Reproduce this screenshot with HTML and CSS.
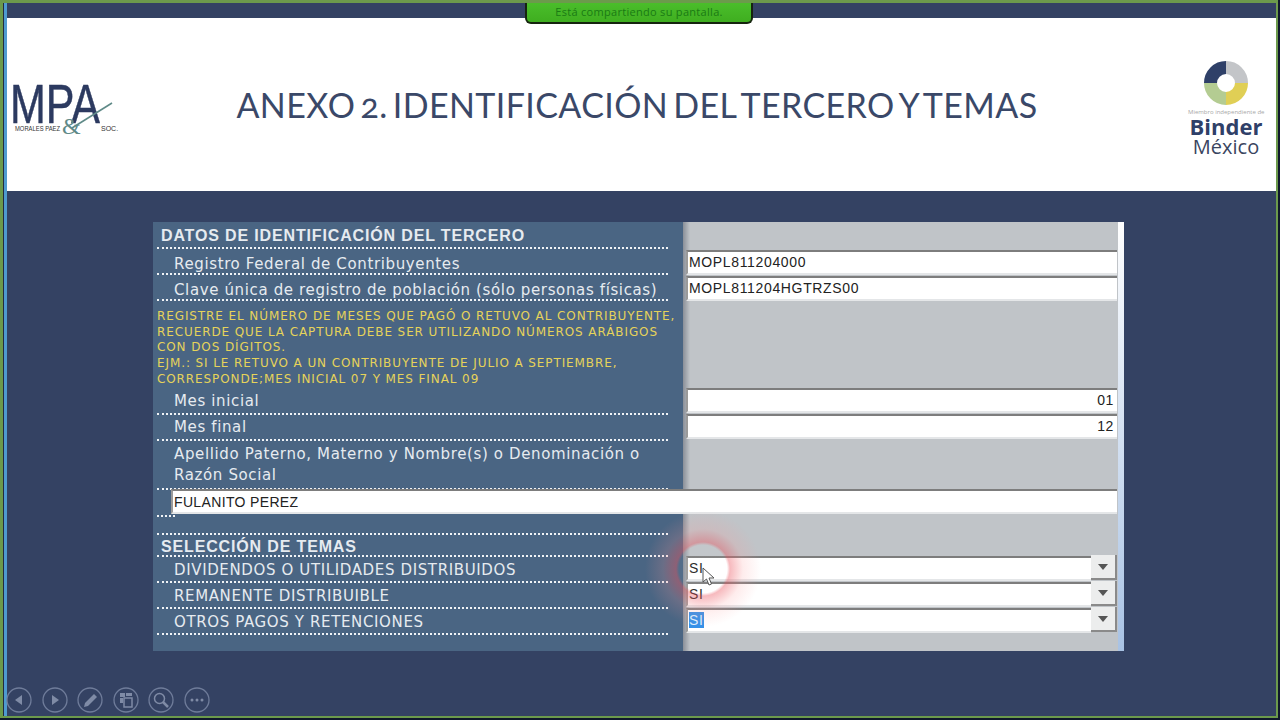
FILE: index.html
```html
<!DOCTYPE html>
<html lang="es">
<head>
    <meta charset="UTF-8">
    <title>Anexo 2</title>
    <link rel="stylesheet" href="styles.css">
</head>
<body>
    <div class="window">
        <div class="share-banner">Está compartiendo su pantalla.</div>

        <header class="slide-header">
            <div class="logo-mpa">
                <svg width="112" height="70" viewBox="0 0 112 70">
                    <text class="mpa-big" x="-2" y="53" textLength="90" lengthAdjust="spacingAndGlyphs">MPA</text>
                    <text class="mpa-small" x="3" y="61" textLength="45" lengthAdjust="spacingAndGlyphs">MORALES PAEZ</text>
                    <text class="mpa-amp" x="50" y="64">&amp;</text>
                    <text class="mpa-small" x="89" y="61">SOC.</text>
                    <line x1="60" y1="58" x2="100" y2="33" stroke="#5f8a88" stroke-width="1.6"/>
                </svg>
            </div>
            <h1 class="slide-title">ANEXO 2. IDENTIFICACIÓN DEL TERCERO Y TEMAS</h1>
            <div class="logo-binder">
                <svg width="44" height="44" viewBox="0 0 44 44">
                    <g fill="none" stroke-width="13">
                        <path d="M22 6.500A15.500 15.500 0 0 0 6.500 22" stroke="#2f4068"/>
                        <path d="M22 6.500A15.500 15.500 0 0 1 37.500 22" stroke="#c3c5c8"/>
                        <path d="M37.500 22A15.500 15.500 0 0 1 22 37.500" stroke="#e0cf55"/>
                        <path d="M22 37.500A15.500 15.500 0 0 1 6.500 22" stroke="#b4cc92"/>
                    </g>
                </svg>
                <div class="binder-tag">Miembro independiente de</div>
                <div class="binder-name">Binder</div>
                <div class="binder-country">México</div>
            </div>
        </header>

        <main class="slide-body">
            <section class="form-panel">
                <div class="row row-title"><div class="label heading">DATOS DE IDENTIFICACIÓN DEL TERCERO</div></div>
                <div class="row row-top">
                    <div class="label">Registro Federal de Contribuyentes</div>
                    <div class="field">MOPL811204000</div>
                </div>
                <div class="row row-top">
                    <div class="label">Clave única de registro de población (sólo personas físicas)</div>
                    <div class="field">MOPL811204HGTRZS00</div>
                </div>
                <div class="notice">
                    REGISTRE EL NÚMERO DE MESES QUE PAGÓ O RETUVO AL CONTRIBUYENTE,<br>
                    RECUERDE QUE LA CAPTURA DEBE SER UTILIZANDO NÚMEROS ARÁBIGOS<br>
                    CON DOS DÍGITOS.<br>
                    EJM.: SI LE RETUVO A UN CONTRIBUYENTE DE JULIO A SEPTIEMBRE,<br>
                    CORRESPONDE;MES INICIAL 07 Y MES FINAL 09
                </div>
                <div class="row">
                    <div class="label">Mes inicial</div>
                    <div class="field number">01</div>
                </div>
                <div class="row">
                    <div class="label">Mes final</div>
                    <div class="field number">12</div>
                </div>
                <div class="row row-double">
                    <div class="label">Apellido Paterno, Materno y Nombre(s) o Denominación o Razón Social</div>
                </div>
                <div class="row-wide">
                    <div class="stub"></div>
                    <div class="field">FULANITO PEREZ</div>
                </div>
                <div class="row row-gap"><div class="label"></div></div>
                <div class="row row-section"><div class="label heading">SELECCIÓN DE TEMAS</div></div>
                <div class="row row-theme">
                    <div class="label">DIVIDENDOS O UTILIDADES DISTRIBUIDOS</div>
                    <div class="select"><div class="field">SI</div><div class="select-btn"></div></div>
                </div>
                <div class="row row-theme">
                    <div class="label">REMANENTE DISTRIBUIBLE</div>
                    <div class="select"><div class="field">SI</div><div class="select-btn"></div></div>
                </div>
                <div class="row row-theme">
                    <div class="label">OTROS PAGOS Y RETENCIONES</div>
                    <div class="select"><div class="field"><span class="picked">SI</span></div><div class="select-btn"></div></div>
                </div>
            </section>

            <div class="pointer-glow"></div>
            <svg class="pointer" width="14" height="19" viewBox="0 0 14 19">
                <path d="M1 1v14l3.500-3 2.500 6 2.500-1-2.500-6h5z" fill="#fff" stroke="#555" stroke-width="1"/>
            </svg>

            <nav class="slide-controls">
                <svg width="26" height="26" viewBox="0 0 26 26"><circle cx="13" cy="13" r="12"/><path class="solid" d="M16 8v10l-7-5z"/></svg>
                <svg width="26" height="26" viewBox="0 0 26 26"><circle cx="13" cy="13" r="12"/><path class="solid" d="M10 8v10l7-5z"/></svg>
                <svg width="26" height="26" viewBox="0 0 26 26"><circle cx="13" cy="13" r="12"/><path class="solid" d="M7 20l1-4 9-9 3 3-9 9z"/></svg>
                <svg width="26" height="26" viewBox="0 0 26 26"><circle cx="13" cy="13" r="12"/><path class="solid" d="M7 6h5v4H7zM13 6h6v3h-6zM7 11h3v5H7z"/><path class="line" d="M11 11h8v9h-8z"/></svg>
                <svg width="26" height="26" viewBox="0 0 26 26"><circle cx="13" cy="13" r="12"/><circle class="line" cx="11.500" cy="11.500" r="5"/><path class="line thick" d="M15 15l5 5"/></svg>
                <svg width="26" height="26" viewBox="0 0 26 26"><circle cx="13" cy="13" r="12"/><circle class="solid" cx="8" cy="13" r="1.500"/><circle class="solid" cx="13" cy="13" r="1.500"/><circle class="solid" cx="18" cy="13" r="1.500"/></svg>
            </nav>
        </main>
    </div>
</body>
</html>
```

FILE: styles.css
```css
body {
    margin: 0;
    background-color: #10182c;
    font-family: "Liberation Sans", Arial, sans-serif;
}
.window {
    position: relative;
    box-sizing: border-box;
    width: 1278px;
    height: 718px;
    display: flex;
    flex-direction: column;
    padding-top: 18px;
    background-color: #344263;
    border: 3px solid #6c9a4c;
    border-right-width: 2px;
    border-bottom-width: 2px;
    box-shadow: inset 1px 0 0 #222b40, inset 4px 0 0 #4f9bd0;
    overflow: hidden;
}
.share-banner {
    position: absolute;
    top: -3px;
    left: 522px;
    box-sizing: border-box;
    width: 228px;
    height: 24px;
    padding-top: 4px;
    text-align: center;
    font-family: "Open Sans", sans-serif;
    font-size: 11px;
    letter-spacing: 0.3px;
    color: #1a7a14;
    background: linear-gradient(#4cc02c, #3fae20);
    border: 2px solid #16240f;
    border-top: none;
    border-radius: 0 0 6px 6px;
}

/* white title band */
.slide-header {
    display: flex;
    align-items: center;
    height: 173px;
    margin-top: -3px;
    margin-left: 4px;
    background-color: #fff;
}
.logo-mpa {
    width: 111px;
    margin-left: 5px;
    margin-top: 1px;
}
.logo-mpa svg {
    display: block;
    overflow: visible;
}
.mpa-big {
    font-family: "Liberation Sans", sans-serif;
    font-size: 56px;
    fill: #2c3a60;
    stroke: #2c3a60;
    stroke-width: 0.5;
}
.mpa-small {
    font-family: "Liberation Sans Narrow", "Liberation Sans", sans-serif;
    font-size: 7px;
    fill: #333;
}
.mpa-amp {
    font-family: "Liberation Serif", serif;
    font-size: 24px;
    fill: #5f8a88;
}
.slide-title {
    flex: 1;
    margin: 0;
    padding-right: 37px;
    text-align: center;
    font-family: "Lato", sans-serif;
    font-weight: 400;
    font-size: 34px;
    letter-spacing: 0.4px;
    word-spacing: -4px;
    font-variant-numeric: oldstyle-nums;
    color: #3a4868;
}
.logo-binder {
    width: 76px;
    margin-right: 12px;
    margin-top: 8px;
    text-align: center;
    color: #2f4068;
}
.logo-binder svg {
    display: block;
    margin: 0 auto 3px;
}
.binder-tag {
    font-family: "Open Sans", sans-serif;
    font-size: 6px;
    white-space: nowrap;
    color: #a8a8a8;
}
.binder-name {
    font-family: "Open Sans", sans-serif;
    font-size: 22px;
    font-weight: 700;
    line-height: 21px;
}
.binder-country {
    font-family: "Open Sans", sans-serif;
    font-size: 20px;
    line-height: 19px;
    color: #3a4560;
}

/* navy slide area */
.slide-body {
    flex: 1;
    padding: 31px 0 0 150px;
}
.form-panel {
    box-sizing: border-box;
    width: 971px;
    height: 429px;
    color: #e6ebf0;
    background: linear-gradient(90deg, #4a6583 530px, #8a8f98 530px, #c0c4c8 537px);
    border-right: 6px solid;
    border-image: linear-gradient(#fff, #a8c2e4) 1;
    font-family: "DejaVu Sans", sans-serif;
}
.row {
    display: grid;
    grid-template-columns: 530px 1fr;
    height: 26px;
}
.row-title {
    height: 27px;
}
.row-double {
    height: 49px;
}
.row-gap {
    height: 19px;
}
.row-section {
    height: 22px;
}
.label {
    box-sizing: border-box;
    margin: 0 15px 0 4px;
    padding-left: 17px;
    font-size: 15px;
    letter-spacing: 0.63px;
    line-height: 24px;
    border-bottom: 2px dotted #f0f3f6;
}
.row-top .label {
    height: 26px;
    padding-top: 3px;
    white-space: nowrap;
}
.row-double .label {
    padding-top: 3px;
    line-height: 21px;
}
.row-theme .label {
    height: 26px;
    padding-top: 1px;
    white-space: nowrap;
}
.row-gap .label {
    height: 19px;
}
.heading {
    padding-left: 4px;
    font-family: "Liberation Sans", sans-serif;
    font-size: 16px;
    font-weight: 700;
    letter-spacing: 0.85px;
    height: 27px;
    line-height: 28px;
}
.row-section .heading {
    height: 22px;
    line-height: 24px;
}
.notice {
    box-sizing: border-box;
    width: 530px;
    height: 88px;
    padding: 8px 0 0 4px;
    font-family: "DejaVu Sans", sans-serif;
    font-size: 12px;
    letter-spacing: 0.9px;
    line-height: 15.700px;
    white-space: nowrap;
    color: #e6d35a;
}
.field {
    box-sizing: border-box;
    height: 25px;
    margin: 1px 1px 0 3px;
    padding-left: 1px;
    font-family: "Liberation Sans", sans-serif;
    font-size: 14px;
    letter-spacing: 0.65px;
    line-height: 21px;
    color: #222;
    background-color: #fff;
    border-top: 2px solid #7d7d7d;
    border-left: 2px solid #9a9a9a;
    border-bottom: 2px solid #e4e6e8;
}
.number {
    margin-top: -1px;
    padding-right: 3px;
    text-align: right;
}
.row-wide {
    display: flex;
    height: 26px;
}
.row-wide .field {
    flex: 1;
    margin: -1px 1px 0 0;
    letter-spacing: 0.35px;
    line-height: 22px;
}
.stub {
    box-sizing: border-box;
    width: 18px;
    margin-left: 4px;
    border-bottom: 2px dotted #f0f3f6;
    margin-bottom: -1px;
    margin-right: -4px;
}
.select {
    display: flex;
    margin-top: -2px;
}
.select .field {
    flex: 1;
    margin-right: 0;
}
.select-btn {
    position: relative;
    box-sizing: border-box;
    width: 26px;
    height: 25px;
    margin-right: 1px;
    background-color: #eceded;
    border-right: 2px solid #8a8a8a;
    border-bottom: 2px solid #8a8a8a;
}
.select-btn::after {
    content: "";
    position: absolute;
    top: 9px;
    left: 7px;
    border-top: 6px solid #555;
    border-left: 5px solid transparent;
    border-right: 5px solid transparent;
}
.picked {
    color: #dceeff;
    background-color: #3490e8;
}

/* recording pointer and its glow, these sit over the form */
.pointer-glow {
    position: absolute;
    left: 640px;
    top: 506px;
    width: 120px;
    height: 120px;
    border-radius: 50%;
    background: radial-gradient(circle, rgba(255,255,255,0.05) 0 24px, rgba(235,90,100,0.42) 27px, rgba(250,150,150,0.18) 40px, rgba(255,170,170,0) 58px);
    pointer-events: none;
}
.pointer {
    position: absolute;
    left: 699px;
    top: 564px;
}
.slide-controls {
    position: absolute;
    left: 3px;
    bottom: 3px;
    display: flex;
    gap: 9.500px;
}
.slide-controls circle {
    fill: none;
    stroke: #6f7c9a;
    stroke-width: 1.300;
}
.slide-controls .solid {
    fill: #7f8ba6;
    stroke: none;
}
.slide-controls .line {
    fill: none;
    stroke: #7f8ba6;
    stroke-width: 1.500;
}
.slide-controls .thick {
    stroke-width: 2.500;
}
```
